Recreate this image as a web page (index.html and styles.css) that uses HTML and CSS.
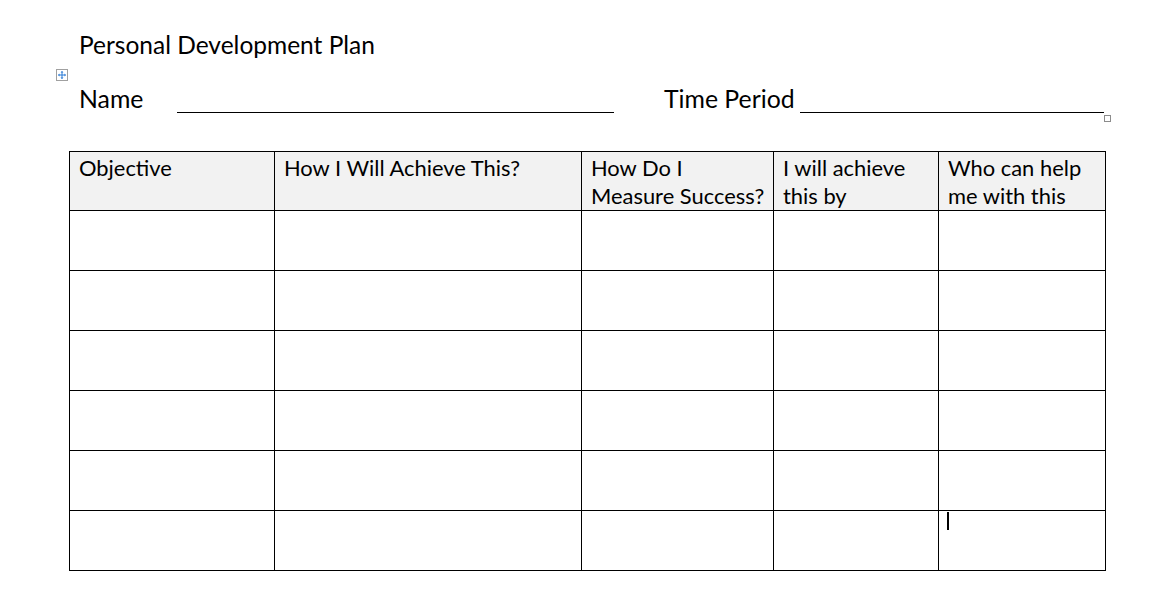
FILE: index.html
```html
<!DOCTYPE html>
<html>
<head>
<meta charset="utf-8">
<link rel="stylesheet" href="styles.css">
</head>
<body>
<div class="doc">
  <h1 class="title">Personal Development Plan</h1>
  <div class="fields">
    <span class="move-handle">
      <svg width="12" height="12" viewBox="0 0 12 12">
        <rect x="0.5" y="0.5" width="11" height="11" fill="#fff" stroke="#a0a0a0"/>
        <path d="M6 2.5v7M2.5 6h7" stroke="#2a7ad5" stroke-width="1"/>
        <path d="M6 2l-1.5 1.5h3zM6 10l-1.5-1.5h3zM2 6l1.5-1.5v3zM10 6l-1.5-1.5v3z" fill="#2a7ad5"/>
      </svg>
    </span>
    <span class="label label-name">Name</span>
    <span class="line line-name"></span>
    <span class="label label-time">Time Period</span>
    <span class="line line-time"></span>
    <span class="resize-handle"></span>
  </div>
  <table class="plan">
    <colgroup>
      <col class="c1"><col class="c2"><col class="c3"><col class="c4"><col class="c5">
    </colgroup>
    <thead>
      <tr>
        <th>Objective</th>
        <th>How I Will Achieve This?</th>
        <th>How Do I<br>Measure Success?</th>
        <th>I will achieve<br>this by</th>
        <th>Who can help<br>me with this</th>
      </tr>
    </thead>
    <tbody>
      <tr><td></td><td></td><td></td><td></td><td></td></tr>
      <tr><td></td><td></td><td></td><td></td><td></td></tr>
      <tr><td></td><td></td><td></td><td></td><td></td></tr>
      <tr><td></td><td></td><td></td><td></td><td></td></tr>
      <tr><td></td><td></td><td></td><td></td><td></td></tr>
      <tr><td></td><td></td><td></td><td></td><td class="cursor-cell"><span class="caret"></span></td></tr>
    </tbody>
  </table>
</div>
</body>
</html>
```
FILE: styles.css
```css
html, body {
  margin: 0;
  padding: 0;
  background: #fff;
}
body {
  font-family: Lato, "Open Sans", sans-serif;
  color: #000;
}
.doc {
  padding: 30px 0 0 69px;
  width: 1037px;
}
.title {
  margin: 0 0 0 10px;
  font-weight: normal;
  font-size: 24.5px;
  line-height: 30px;
}
.fields {
  position: relative;
  display: flex;
  align-items: flex-end;
  margin-top: 23px;
  height: 30px;
  padding-left: 10px;
}
.move-handle {
  position: absolute;
  left: -13px;
  top: -14px;
  width: 12px;
  height: 12px;
}
.move-handle svg { display: block; }
.label {
  font-size: 24.8px;
  line-height: 28px;
  white-space: nowrap;
}
.label-name { width: 98px; }
.label-time {
  margin-left: 50px;
  width: 136px;
}
.line {
  border-bottom: 1.5px solid #000;
  height: 0;
  margin-bottom: 0;
}
.line-name { width: 437px; }
.line-time { width: 304px; }
.resize-handle {
  position: absolute;
  left: 1035px;
  top: 32px;
  width: 5px;
  height: 5px;
  border: 1px solid #8c8c8c;
  background: #fff;
}
.plan {
  margin-top: 38px;
  border-collapse: collapse;
  table-layout: fixed;
  width: 1036px;
}
.c1 { width: 205px; }
.c2 { width: 307px; }
.c3 { width: 192px; }
.c4 { width: 165px; }
.c5 { width: 167px; }
.plan th, .plan td {
  border: 1px solid #000;
  padding: 0 0 0 9px;
  text-align: left;
  vertical-align: top;
}
.plan th {
  background: #f2f2f2;
  font-weight: normal;
  font-size: 21.9px;
  line-height: 28px;
  height: 56px;
  padding-top: 2px;
  white-space: nowrap;
}
.plan td {
  height: 59px;
}
.cursor-cell { position: relative; }
.caret {
  position: absolute;
  left: 8px;
  top: 1px;
  width: 2px;
  height: 18px;
  background: #000;
}
```
